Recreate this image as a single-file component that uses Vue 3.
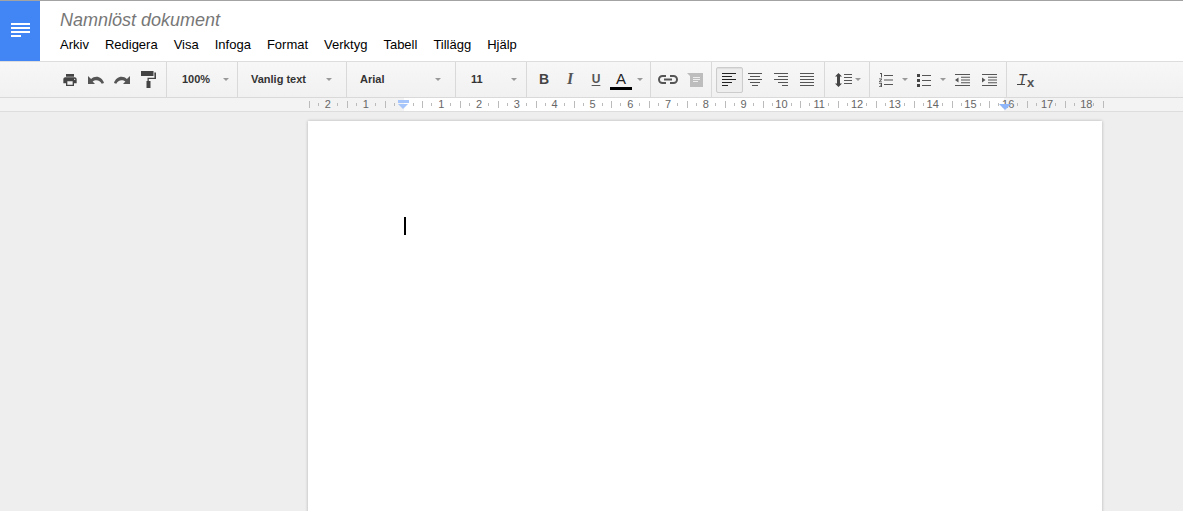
<script setup>
const menus = ['Arkiv', 'Redigera', 'Visa', 'Infoga', 'Format', 'Verktyg', 'Tabell', 'Tillägg', 'Hjälp']
const rulerCells = ['2', '1', '', ...Array.from({ length: 18 }, (_, i) => String(i + 1))]
</script>

<template>
  <div class="app">
    <header class="header">
      <div class="logo">
        <svg width="20" height="16" viewBox="0 0 20 16" fill="#fff">
          <rect y="0" width="19" height="2" /><rect y="4" width="19" height="2" />
          <rect y="8" width="19" height="2" /><rect y="12" width="10" height="2" />
        </svg>
      </div>
      <div class="titles">
        <div class="doc-title">Namnlöst dokument</div>
        <nav class="menu"><span v-for="m in menus" :key="m">{{ m }}</span></nav>
      </div>
    </header>

    <div class="toolbar">
      <div class="group g1">
        <button class="btn">
          <svg width="16" height="16" viewBox="0 0 24 24" fill="#444"><path d="M19 8H5c-1.660 0-3 1.340-3 3v6h4v4h12v-4h4v-6c0-1.660-1.340-3-3-3zm-3 11H8v-5h8v5zm3-7c-.55 0-1-.45-1-1s.45-1 1-1 1 .45 1 1-.45 1-1 1zm-1-9H6v4h12V3z" /></svg>
        </button>
        <button class="btn">
          <svg width="16" height="10" viewBox="0 0 16 10" fill="#555"><path d="M0 1v8h7L4.600 6.600C5.700 5.600 7 5.200 8.400 5.200c2.300 0 4.200 1.400 5.300 3.600L16 8C14.800 4.200 11.900 1.800 8.400 1.800 6.500 1.800 4.600 2.600 3.100 3.900z" /></svg>
        </button>
        <button class="btn">
          <svg width="16" height="10" viewBox="0 0 16 10" fill="#555"><path d="M16 1v8H9l2.400-2.400C10.300 5.600 9 5.200 7.600 5.200c-2.300 0-4.200 1.400-5.300 3.600L0 8C1.200 4.200 4.100 1.800 7.600 1.800c1.900 0 3.800.8 5.300 2.100z" /></svg>
        </button>
        <button class="btn">
          <svg width="15" height="17" viewBox="0 0 15 17" fill="#444"><path d="M0 0h12.500v5H0zM13.300 1.500H15V8H7.800v2H9.500v7h-4v-7h1V6.800h7z" /></svg>
        </button>
      </div>

      <div class="group g2"><span class="select-label">100%</span><i class="caret"></i></div>
      <div class="group g3"><span class="select-label">Vanlig text</span><i class="caret wide"></i></div>
      <div class="group g4"><span class="select-label">Arial</span><i class="caret wide"></i></div>
      <div class="group g5"><span class="select-label">11</span><i class="caret narrow"></i></div>

      <div class="group g6">
        <button class="btn glyph bold">B</button>
        <button class="btn glyph italic">I</button>
        <button class="btn glyph under">U</button>
        <button class="btn color-btn"><span class="color-a">A</span><span class="color-bar"></span></button>
        <i class="caret small"></i>
      </div>

      <div class="group g7">
        <button class="btn link-btn">
          <svg width="20" height="9" viewBox="0 0 20 9" fill="none" stroke="#555" stroke-width="2"><path d="M8 1H4.500a3.500 3.500 0 0 0 0 7H8M12 1h3.500a3.500 3.500 0 0 1 0 7H12M6 4.500h8" /></svg>
        </button>
        <button class="btn comment-btn">
          <svg width="16" height="14" viewBox="0 0 16 14"><path fill="#bdbdbd" d="M0 0h16v14H3V3z" /><path fill="#eee" d="M6 4h7v1H6zM6 6h7v1H6zM6 8h5v1H6z" /></svg>
        </button>
      </div>

      <div class="group g8">
        <button class="btn al active">
          <svg width="14" height="13" viewBox="0 0 14 13" fill="#222"><path d="M0 0h14v1H0zM0 3h10v1H0zM0 6h14v1H0zM0 9h10v1H0zM0 12h6v1H0z" /></svg>
        </button>
        <button class="btn al">
          <svg width="14" height="13" viewBox="0 0 14 13" fill="#555"><path d="M0 0h14v1H0zM2 3h10v1H2zM0 6h14v1H0zM2 9h10v1H2zM4 12h6v1H4z" /></svg>
        </button>
        <button class="btn al">
          <svg width="14" height="13" viewBox="0 0 14 13" fill="#555"><path d="M0 0h14v1H0zM4 3h10v1H4zM0 6h14v1H0zM4 9h10v1H4zM8 12h6v1H8z" /></svg>
        </button>
        <button class="btn al">
          <svg width="14" height="13" viewBox="0 0 14 13" fill="#555"><path d="M0 0h14v1H0zM0 3h14v1H0zM0 6h14v1H0zM0 9h14v1H0zM0 12h14v1H0z" /></svg>
        </button>
      </div>

      <div class="group g9">
        <svg width="18" height="14" viewBox="0 0 18 14" fill="#444"><path d="M3.500 0L7 3.500H5V10.500h2L3.500 14 0 10.500h2V3.500H0z" /><path fill="#555" d="M9 1h8v1H9zM9 4h8v1H9zM9 7h8v1H9zM9 10h8v1H9z" /></svg>
        <i class="caret small spaced"></i>
      </div>

      <div class="group g10">
        <svg class="l1" width="14" height="14" viewBox="0 0 14 14" fill="#555"><path d="M1 0h2v4.500H2V1H1zM0 5.500h3v1L1 8.500h2v.8H0v-.8L2 6.300H0zM0 10h3v4H0v-.8h2v-.8H1v-.6h1v-1H0z" /><path d="M5 2h9v1H5zM5 6.500h9v1H5zM5 11h9v1H5z" /></svg>
        <i class="caret small c1"></i>
        <svg class="l2" width="14" height="14" viewBox="0 0 14 14" fill="#444"><path d="M0 1h3v3H0zM0 6h3v3H0zM0 11h3v3H0z" /><path fill="#555" d="M5 2h9v1H5zM5 7h9v1H5zM5 12h9v1H5z" /></svg>
        <i class="caret small c2"></i>
        <svg class="l3" width="15" height="12" viewBox="0 0 15 12" fill="#555"><path d="M0 0h15v1H0zM6 2.750h9v1H6zM6 5.500h9v1H6zM6 8.250h9v1H6zM0 11h15v1H0zM3.500 3.500v5L0 6z" /></svg>
        <svg class="l4" width="15" height="12" viewBox="0 0 15 12" fill="#555"><path d="M0 0h15v1H0zM6 2.750h9v1H6zM6 5.500h9v1H6zM6 8.250h9v1H6zM0 11h15v1H0zM0 3.500v5L3.500 6z" /></svg>
      </div>

      <div class="group g11">
        <span class="clear"><span class="clear-t">T</span><span class="clear-line"></span><span class="clear-x">x</span></span>
      </div>
    </div>

    <div class="ruler">
      <div class="ruler-white"></div>
      <div class="ruler-scale">
        <div v-for="(n, i) in rulerCells" :key="i" class="cell">{{ n }}</div>
        <div class="ruler-end"></div>
      </div>
      <div class="indent-left"><span class="bar"></span><span class="tri"></span></div>
      <div class="indent-right"></div>
    </div>

    <main class="workspace">
      <div class="page"><div class="cursor"></div></div>
    </main>
  </div>
</template>

<style>
html, body { margin: 0; overflow: hidden; }
</style>

<style scoped>
.app {
  width: 1183px;
  height: 511px;
  overflow: hidden;
  display: flex;
  flex-direction: column;
  background: #eee;
  font-family: "Liberation Sans", Arial, sans-serif;
  border-top: 1px solid #a3a3a3;
  box-sizing: border-box;
}
.header {
  height: 60px;
  flex: none;
  display: flex;
  background: #fff;
  border-bottom: 1px solid #ddd;
}
.logo {
  width: 40px;
  background: #4285f4;
  display: flex;
  justify-content: center;
  padding-top: 22px;
  box-sizing: border-box;
  padding-left: 1px;
}
.titles { padding-left: 20px; }
.doc-title {
  margin-top: 9px;
  font-size: 18px;
  line-height: 20px;
  font-style: italic;
  color: #777;
}
.menu {
  display: flex;
  gap: 16px;
  margin-top: 6px;
  font-size: 13px;
  line-height: 18px;
  color: #000;
}
.toolbar {
  height: 35px;
  flex: none;
  display: flex;
  background: linear-gradient(#f7f7f7, #f1f1f1);
  border-bottom: 1px solid #d9d9d9;
}
.group {
  display: flex;
  align-items: center;
  box-sizing: border-box;
  border-right: 1px solid #d9d9d9;
  flex: none;
  color: #333;
}
.g1 { width: 167px; padding-left: 57px; }
.g2 { width: 71px; padding-left: 15px; }
.g3 { width: 109px; padding-left: 13px; }
.g4 { width: 109px; padding-left: 13px; }
.g5 { width: 71px; padding-left: 15px; }
.g6 { width: 124px; padding-left: 4px; }
.g7 { width: 61px; padding-left: 4px; }
.g8 { width: 113px; padding-left: 4px; }
.g9 { width: 45px; padding-left: 10px; }
.g10 { width: 137px; padding-left: 9px; }
.g11 { border-right: 0; padding-left: 10px; }
.btn {
  width: 26px;
  height: 26px;
  flex: none;
  padding: 0;
  border: 1px solid transparent;
  border-radius: 2px;
  background: none;
  display: flex;
  align-items: center;
  justify-content: center;
  font-family: inherit;
  color: #444;
}
.select-label {
  flex: 1;
  font-size: 11px;
  font-weight: 700;
  color: #333;
  margin-bottom: 2px;
}
.caret {
  width: 0;
  height: 0;
  flex: none;
  border: 3px solid transparent;
  border-top: 3px solid #999;
  border-bottom: 0;
  margin-right: 8px;
}
.caret.wide { margin-right: 14px; }
.caret.narrow { margin-right: 9px; }
.glyph { font-weight: 700; padding-bottom: 2px; }
.bold { font-size: 14px; color: #444; }
.italic { font-family: "Liberation Serif", serif; font-style: italic; font-size: 16px; color: #555; }
.under { font-size: 12px; color: #555; text-decoration: underline; text-underline-offset: 2px; }
.color-btn {
  width: 24px;
  flex-direction: column;
  justify-content: flex-start;
  padding-top: 2px;
}
.color-a { font-size: 15px; line-height: 17px; color: #222; }
.color-bar { width: 22px; height: 3px; background: #000; }
.caret.small { margin: 0 0 0 4px; }
.comment-btn { width: 27px; }
.active {
  width: 27px;
  margin-right: -1px;
  padding-right: 1px;
  background: #eee;
  border-color: #ccc;
  box-shadow: inset 0 1px 1px #ddd;
}
.caret.spaced { margin-left: 2px; }
.g10 .c1 { margin-left: 9px; }
.g10 .l2 { margin-left: 9px; }
.g10 .c2 { margin-left: 9px; }
.g10 .l3 { margin-left: 9px; }
.g10 .l4 { margin-left: 12px; }
.clear {
  position: relative;
  display: flex;
  width: 18px;
  height: 16px;
}
.clear-t {
  font-style: italic;
  font-size: 14px;
  line-height: 14px;
  color: #444;
  margin-left: 1px;
}
.clear-line {
  position: absolute;
  left: 0;
  top: 12px;
  width: 8px;
  height: 1px;
  background: #444;
}
.clear-x {
  font-size: 13px;
  font-weight: 700;
  color: #555;
  line-height: 13px;
  margin: 4px 0 0 0.5px;
}
.ruler {
  height: 13px;
  flex: none;
  position: relative;
  background: #f3f3f3;
  border-bottom: 1px solid #ddd;
  padding-left: 309px;
}
.ruler-white {
  position: absolute;
  left: 404px;
  width: 600px;
  top: 0;
  bottom: 0;
  background: #fff;
}
.ruler-scale { display: flex; position: relative; }
.cell {
  width: 37.8px;
  height: 13px;
  flex: none;
  text-align: center;
  font-size: 11px;
  line-height: 13px;
  color: #666;
  background-image:
    linear-gradient(#bbb, #bbb),
    linear-gradient(#bbb, #bbb),
    linear-gradient(#bbb, #bbb);
  background-size: 1px 7px, 1px 3px, 1px 3px;
  background-position: 0 3px, 9px 5px, 28px 5px;
  background-repeat: no-repeat;
}
.cell:nth-last-child(2) { text-indent: 5px; }
.cell:nth-last-child(3) { text-indent: 2px; }
.ruler-end { width: 1px; height: 7px; margin-top: 3px; background: #bbb; flex: none; }
.indent-left {
  position: absolute;
  left: 398px;
  top: 2px;
  width: 11px;
}
.bar { display: block; height: 3px; background: #a6c5fb; margin-bottom: 1px; }
.tri {
  display: block;
  width: 0;
  height: 0;
  border: 5.5px solid transparent;
  border-top: 5px solid #a6c5fb;
  border-bottom: 0;
}
.indent-right {
  position: absolute;
  left: 999px;
  top: 6px;
  width: 0;
  height: 0;
  border: 6px solid transparent;
  border-top: 6px solid #8fb6f8;
  border-bottom: 0;
}
.workspace {
  flex: 1;
  padding: 9px 0 0 308px;
  min-height: 0;
}
.page {
  width: 794px;
  height: 1123px;
  box-sizing: border-box;
  background: #fff;
  padding: 96px 0 0 96px;
  box-shadow: 0 0 3px rgba(0, 0, 0, 0.25);
}
.cursor { width: 2px; height: 18px; background: #000; }
</style>
